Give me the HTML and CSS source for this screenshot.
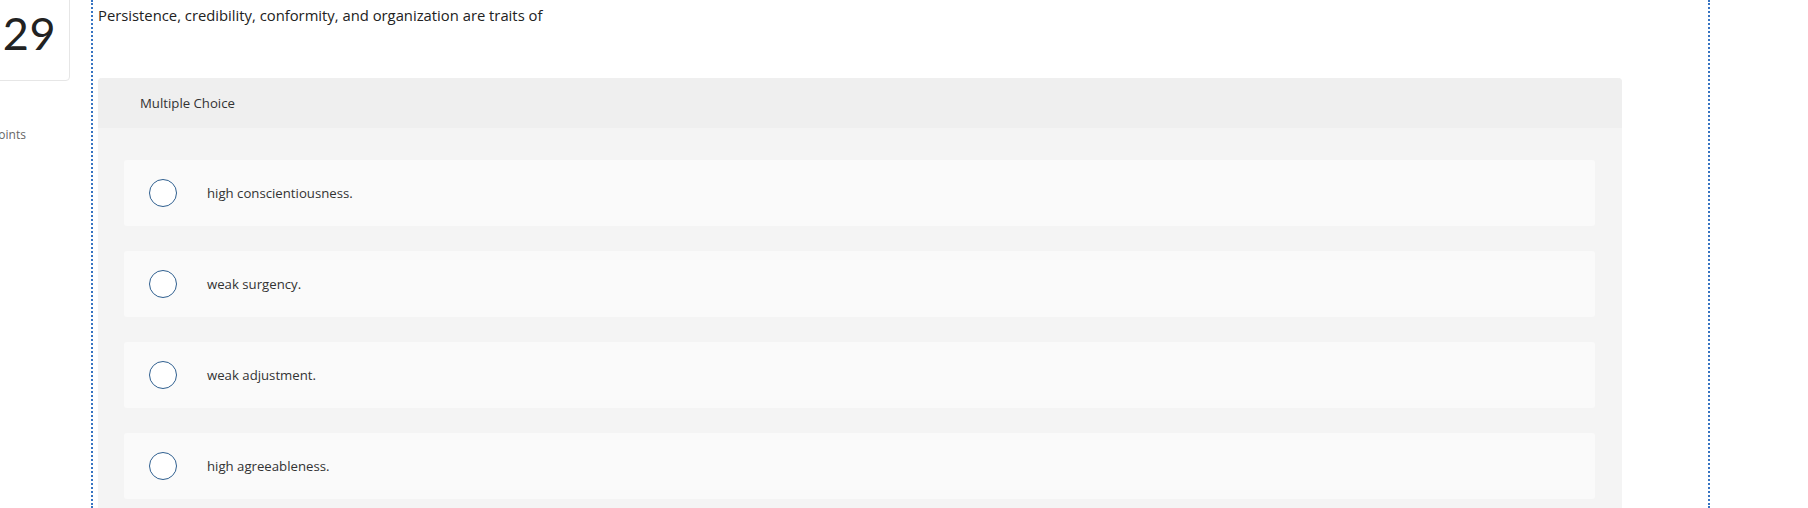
FILE: index.html
```html
<!DOCTYPE html>
<html lang="en">
<head>
  <meta charset="UTF-8" />
  <meta name="viewport" content="width=device-width, initial-scale=1.0"/>
  <title>Question 29</title>
  <link rel="stylesheet" href="styles.css">
</head>
<body>
  <aside class="sidebar">
    <div class="number-card">
      <span class="number">29</span>
    </div>
    <p class="points">points</p>
  </aside>

  <main class="question">
    <p class="prompt">Persistence, credibility, conformity, and organization are traits of</p>

    <section class="choices">
      <div class="choices-header">Multiple Choice</div>
      <div class="choices-body">
        <label class="choice">
          <span class="radio"></span>
          <span class="choice-text">high conscientiousness.</span>
        </label>
        <label class="choice">
          <span class="radio"></span>
          <span class="choice-text">weak surgency.</span>
        </label>
        <label class="choice">
          <span class="radio"></span>
          <span class="choice-text">weak adjustment.</span>
        </label>
        <label class="choice">
          <span class="radio"></span>
          <span class="choice-text">high agreeableness.</span>
        </label>
      </div>
    </section>
  </main>

  <div class="gutter"></div>
</body>
</html>
```

FILE: styles.css
```css
body {
  margin: 0;
  padding: 0;
  font-family: 'Open Sans', 'Noto Sans', sans-serif;
  background: #fff;
  color: #222;
  display: flex;
  height: 508px;
  overflow: hidden;
}

.sidebar {
  width: 91px;
  flex-shrink: 0;
  overflow: hidden;
}

.number-card {
  width: 100px;
  height: 121px;
  margin-left: -30px;
  margin-top: -40px;
  border: 1px solid #e6e6e6;
  border-radius: 4px;
  box-sizing: border-box;
  display: flex;
  align-items: flex-end;
  justify-content: flex-end;
  padding: 0 13px 24px 0;
}

.number {
  font-family: Lato, 'Open Sans', sans-serif;
  font-size: 45px;
  font-weight: 400;
  line-height: 1;
  color: #222;
  letter-spacing: 0.5px;
}

.points {
  margin: 45px 0 0 -9px;
  font-size: 12px;
  color: #666;
}

.question {
  width: 1524px;
  flex-shrink: 0;
  border-left: 2px dotted #3774c2;
  border-right: 2px dotted #3774c2;
  padding: 0 86px 0 5px;
}

.prompt {
  margin: 5px 0 0 0;
  font-size: 14.8px;
  line-height: 20px;
  color: #222;
}

.choices {
  margin-top: 53px;
  width: 1524px;
  border-radius: 4px 4px 0 0;
  overflow: hidden;
  background: #f4f4f4;
}

.choices-header {
  height: 50px;
  background: #efefef;
  padding-left: 42px;
  display: flex;
  align-items: center;
  font-size: 13.2px;
  color: #333;
}

.choices-body {
  padding: 32px 27px 20px 26px;
  display: flex;
  flex-direction: column;
  gap: 25px;
}

.choice {
  height: 66px;
  background: #fafafa;
  border-radius: 3px;
  display: flex;
  align-items: center;
  padding-left: 25px;
  cursor: pointer;
}

.radio {
  width: 28px;
  height: 28px;
  box-sizing: border-box;
  border: 1.5px solid #2f5f8f;
  border-radius: 50%;
  background: #fff;
  flex-shrink: 0;
}

.choice-text {
  margin-left: 30px;
  font-size: 13.2px;
  color: #333;
}

.gutter {
  flex: 1;
}
```
